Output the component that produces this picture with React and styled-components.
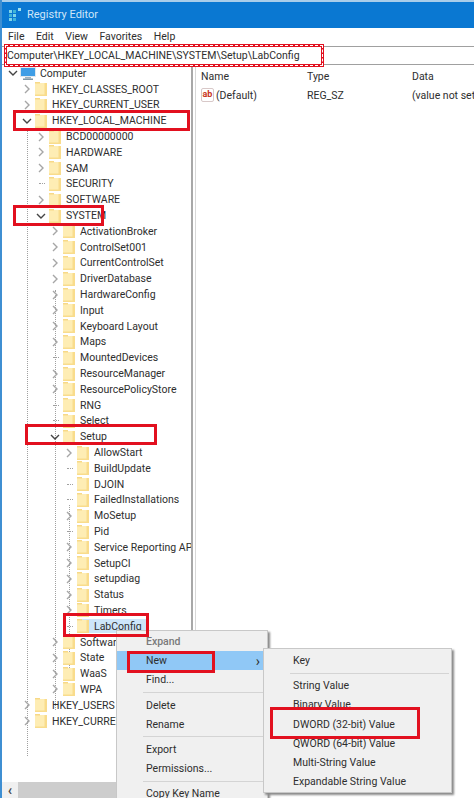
import React from "react";
import styled, { createGlobalStyle } from "styled-components";

const treeRows = [
    { level: 0, name: "Computer", state: "open", computer: true },
    { level: 1, name: "HKEY_CLASSES_ROOT", state: "closed" },
    { level: 1, name: "HKEY_CURRENT_USER", state: "closed" },
    { level: 1, name: "HKEY_LOCAL_MACHINE", state: "open" },
    { level: 2, name: "BCD00000000", state: "closed" },
    { level: 2, name: "HARDWARE", state: "closed" },
    { level: 2, name: "SAM", state: "closed" },
    { level: 2, name: "SECURITY", state: "leaf" },
    { level: 2, name: "SOFTWARE", state: "closed" },
    { level: 2, name: "SYSTEM", state: "open" },
    { level: 3, name: "ActivationBroker", state: "closed" },
    { level: 3, name: "ControlSet001", state: "closed" },
    { level: 3, name: "CurrentControlSet", state: "closed" },
    { level: 3, name: "DriverDatabase", state: "closed" },
    { level: 3, name: "HardwareConfig", state: "closed" },
    { level: 3, name: "Input", state: "closed" },
    { level: 3, name: "Keyboard Layout", state: "closed" },
    { level: 3, name: "Maps", state: "closed" },
    { level: 3, name: "MountedDevices", state: "leaf" },
    { level: 3, name: "ResourceManager", state: "closed" },
    { level: 3, name: "ResourcePolicyStore", state: "closed" },
    { level: 3, name: "RNG", state: "leaf" },
    { level: 3, name: "Select", state: "leaf" },
    { level: 3, name: "Setup", state: "open" },
    { level: 4, name: "AllowStart", state: "closed" },
    { level: 4, name: "BuildUpdate", state: "leaf" },
    { level: 4, name: "DJOIN", state: "leaf" },
    { level: 4, name: "FailedInstallations", state: "leaf" },
    { level: 4, name: "MoSetup", state: "closed" },
    { level: 4, name: "Pid", state: "leaf" },
    { level: 4, name: "Service Reporting API", state: "closed" },
    { level: 4, name: "SetupCI", state: "closed" },
    { level: 4, name: "setupdiag", state: "closed" },
    { level: 4, name: "Status", state: "closed" },
    { level: 4, name: "Timers", state: "closed" },
    { level: 4, name: "LabConfig", state: "leaf", selected: true },
    { level: 3, name: "Software", state: "closed" },
    { level: 3, name: "State", state: "closed" },
    { level: 3, name: "WaaS", state: "closed" },
    { level: 3, name: "WPA", state: "closed" },
    { level: 1, name: "HKEY_USERS", state: "closed" },
    { level: 1, name: "HKEY_CURRENT_CONFIG", state: "closed" },
];

const contextItems = [
    { label: "Expand", disabled: true },
    { label: "New", active: true, arrow: true },
    { label: "Find..." },
    { separator: true },
    { label: "Delete" },
    { label: "Rename" },
    { separator: true },
    { label: "Export" },
    { label: "Permissions..." },
    { separator: true },
    { label: "Copy Key Name" },
];

const submenuItems = [
    { label: "Key" },
    { separator: true },
    { label: "String Value" },
    { label: "Binary Value" },
    { label: "DWORD (32-bit) Value" },
    { label: "QWORD (64-bit) Value" },
    { label: "Multi-String Value" },
    { label: "Expandable String Value" },
];

const marks = [
    { x: 13, y: 110, w: 177, h: 21 },
    { x: 13, y: 205, w: 91, h: 21 },
    { x: 25, y: 424, w: 132, h: 21 },
    { x: 63, y: 613, w: 86, h: 24 },
    { x: 127, y: 651, w: 88, h: 22 },
    { x: 270, y: 707, w: 150, h: 32 },
];

function Chevron({ open }) {
    return (
        <ChevronIcon width="10" height="10" viewBox="0 0 10 10" $open={open}>
            <path d={open ? "M1 3l4 4 4-4" : "M3 1l4 4-4 4"} />
        </ChevronIcon>
    );
}

function Folder() {
    return (
        <FolderIcon width="12" height="14" viewBox="0 0 12 14">
            <rect x="0" y="1" width="12" height="13" fill="#f9dc8c" />
            <rect x="0" y="1" width="9.5" height="11.5" fill="#feedb4" />
            <rect x="0" y="0" width="5" height="1.5" fill="#f7d988" />
        </FolderIcon>
    );
}

function ComputerGlyph() {
    return (
        <ComputerIcon width="16" height="13" viewBox="0 0 16 13">
            <rect x="0" y="0" width="16" height="10" fill="#dfe8ee" />
            <rect x="1" y="1" width="14" height="8" fill="#3f9ee6" />
            <rect x="5" y="10" width="6" height="1.5" fill="#9fb2be" />
            <rect x="3" y="11.5" width="10" height="1.5" fill="#7f97a6" />
        </ComputerIcon>
    );
}

function TreeRow({ row }) {
    return (
        <Row $level={row.level}>
            <Toggle>
                {row.state === "leaf" ? <Connector /> : <Chevron open={row.state === "open"} />}
            </Toggle>
            <RowBody $selected={row.selected}>
                {row.computer ? <ComputerGlyph /> : <Folder />}
                <span>{row.name}</span>
            </RowBody>
        </Row>
    );
}

function PopupMenu({ items, Component }) {
    return (
        <Component>
            {items.map((item, i) =>
                item.separator ? (
                    <Separator key={i} />
                ) : (
                    <MenuItem key={i} $active={item.active} $disabled={item.disabled}>
                        {item.label}
                        {item.arrow && <Arrow>›</Arrow>}
                    </MenuItem>
                )
            )}
        </Component>
    );
}

export default function App() {
    return (
        <>
            <GlobalStyle />
            <Window>
                <TitleBar>
                    <AppIcon width="13" height="13" viewBox="0 0 13 13">
                        <rect x="0" y="2" width="3" height="3" fill="#7fd4e8" />
                        <rect x="4" y="2" width="3" height="3" fill="#3fb4d8" />
                        <rect x="0" y="6" width="3" height="3" fill="#3fb4d8" />
                        <rect x="4" y="6" width="3" height="3" fill="#7fd4e8" />
                        <rect x="0" y="10" width="3" height="3" fill="#7fd4e8" />
                        <rect x="4" y="10" width="3" height="3" fill="#3fb4d8" />
                        <rect x="9" y="0" width="3" height="3" fill="#9fe0ee" />
                    </AppIcon>
                    <Title>Registry Editor</Title>
                </TitleBar>
                <MenuBar>
                    <span>File</span>
                    <span>Edit</span>
                    <span>View</span>
                    <span>Favorites</span>
                    <span>Help</span>
                </MenuBar>
                <AddressBar>Computer\HKEY_LOCAL_MACHINE\SYSTEM\Setup\LabConfig</AddressBar>
                <Panes>
                    <TreePane>
                        <GuideLine $x={25} $top={0} $height={626} />
                        <GuideLine $x={53} $top={160} $height={420} />
                        <GuideLine $x={67} $top={375} $height={175} />
                        {treeRows.map((row) => (
                            <TreeRow key={row.name} row={row} />
                        ))}
                        <ScrollBar>
                            <ScrollArrow>‹</ScrollArrow>
                            <ScrollThumb />
                        </ScrollBar>
                    </TreePane>
                    <ListPane>
                        <ListHeader>
                            <NameCell>Name</NameCell>
                            <TypeCell>Type</TypeCell>
                            <DataCell>Data</DataCell>
                        </ListHeader>
                        <ListRow>
                            <NameCell>
                                <ValueIcon>ab</ValueIcon>
                                (Default)
                            </NameCell>
                            <TypeCell>REG_SZ</TypeCell>
                            <DataCell>(value not set)</DataCell>
                        </ListRow>
                    </ListPane>
                </Panes>
                <PopupMenu items={contextItems} Component={ContextMenu} />
                <PopupMenu items={submenuItems} Component={SubMenu} />
                <AddressMark />
                {marks.map((m) => (
                    <RedMark key={m.y} style={{ left: m.x, top: m.y, width: m.w, height: m.h }} />
                ))}
            </Window>
        </>
    );
}

const GlobalStyle = createGlobalStyle`
    html, body {
        margin: 0;
        padding: 0;
        background: white;
    }
    * {
        box-sizing: border-box;
    }
`;

const Window = styled.div`
    position: relative;
    width: 474px;
    height: 798px;
    overflow: hidden;
    background: white;
    border-left: 2px solid #3f8fd2;
    font-family: Roboto, "Noto Sans", sans-serif;
    font-size: 10.5px;
    color: #2e2e2e;
`;

const TitleBar = styled.div`
    height: 28px;
    margin-left: -2px;
    padding: 0 0 0 9px;
    display: flex;
    align-items: center;
    gap: 5px;
    background: linear-gradient(#a9cdea 0 2px, #0a78d2 2px);
`;

const AppIcon = styled.svg`
    flex: none;
`;

const Title = styled.span`
    color: #cfe6f8;
    font-size: 11px;
`;

const MenuBar = styled.div`
    height: 16px;
    padding-left: 6px;
    display: flex;
    align-items: center;
    gap: 11.5px;
`;

const AddressBar = styled.div`
    height: 19px;
    margin-top: 2px;
    padding-left: 5px;
    display: flex;
    align-items: center;
    border-top: 1px solid #a0a0a0;
    border-bottom: 1px solid #a0a0a0;
    white-space: nowrap;
`;

const Panes = styled.div`
    display: flex;
    height: 733px;
`;

const TreePane = styled.div`
    position: relative;
    width: 191px;
    height: 733px;
    padding-top: 0.5px;
    overflow: hidden;
    flex: none;
    border-right: 2px solid #a8a8a8;
`;

const GuideLine = styled.div`
    position: absolute;
    left: ${(p) => p.$x}px;
    top: ${(p) => p.$top + 65}px;
    height: ${(p) => p.$height}px;
    border-left: 1px dotted #a0a0a0;
`;

const Row = styled.div`
    position: relative;
    height: 15.8px;
    padding-left: ${(p) => 6 + p.$level * 14}px;
    display: flex;
    align-items: center;
    white-space: nowrap;
`;

const Toggle = styled.span`
    width: 10px;
    height: 14px;
    margin-right: 3px;
    flex: none;
    display: flex;
    align-items: center;
    justify-content: center;
`;

const RowBody = styled.span`
    display: flex;
    align-items: center;
    padding-right: 4px;
    background: ${(p) => (p.$selected ? "#cde6fa" : "transparent")};
`;

const ChevronIcon = styled.svg`
    fill: none;
    stroke: ${(p) => (p.$open ? "#444" : "#a6a6a6")};
    stroke-width: 1.4;
`;

const Connector = styled.span`
    width: 6px;
    margin-left: 2px;
    border-top: 1px dotted #a0a0a0;
`;

const FolderIcon = styled.svg`
    flex: none;
    margin-right: 5px;
`;

const ComputerIcon = styled.svg`
    flex: none;
    margin-right: 4px;
    margin-left: -1px;
`;

const ScrollBar = styled.div`
    position: absolute;
    left: 0;
    right: 0;
    bottom: 0;
    height: 16px;
    display: flex;
    align-items: center;
    background: #f0f0f0;
`;

const ScrollArrow = styled.span`
    width: 16px;
    text-align: center;
    font-size: 14px;
    font-weight: 700;
    color: #444;
`;

const ScrollThumb = styled.div`
    width: 100px;
    height: 100%;
    background: #cdcdcd;
`;

const ListPane = styled.div`
    flex: 1;
    min-width: 0;
    margin-left: 2px;
    padding-left: 5px;
    overflow: hidden;
    border-left: 1px solid #d8d8d8;
`;

const ListHeader = styled.div`
    height: 22px;
    display: flex;
    align-items: center;
    white-space: nowrap;
`;

const ListRow = styled(ListHeader)`
    height: 20px;
    margin-top: -2px;
`;

const NameCell = styled.span`
    width: 106px;
    flex: none;
    display: flex;
    align-items: center;
`;

const TypeCell = styled.span`
    width: 105px;
    flex: none;
`;

const DataCell = styled.span`
    flex: none;
`;

const ValueIcon = styled.span`
    width: 13px;
    height: 14px;
    margin-right: 2px;
    border: 1px solid #d8c8c8;
    border-radius: 2px;
    color: #c8341c;
    font-size: 9px;
    font-weight: 700;
    line-height: 11px;
    text-align: center;
`;

const popup = `
    position: absolute;
    background: #f0f0f0;
    border: 1px solid #c8c8c8;
    box-shadow: 2px 2px 2px #8a8a8a;
`;

const ContextMenu = styled.div`
    ${popup}
    left: 114px;
    top: 630px;
    width: 152px;
    height: 180px;
    padding-top: 1px;
`;

const SubMenu = styled.div`
    ${popup}
    left: 261px;
    top: 648px;
    width: 189px;
    height: 145px;
    padding-top: 2px;
`;

const MenuItem = styled.div`
    position: relative;
    height: 19.2px;
    padding-left: 29px;
    display: flex;
    align-items: center;
    white-space: nowrap;
    color: ${(p) => (p.$disabled ? "#7a7a7a" : "#2e2e2e")};
    font-weight: ${(p) => (p.$disabled ? 500 : 400)};
    background: ${(p) => (p.$active ? "#90c8f6" : "transparent")};
`;

const Arrow = styled.span`
    position: absolute;
    right: 7px;
    font-size: 14px;
`;

const Separator = styled.div`
    height: 1px;
    margin: 2.5px 2px 2.5px 26px;
    background: #d4d4d4;
`;

const RedMark = styled.div`
    position: absolute;
    margin-left: -2px;
    border: 3px solid #e2101f;
`;

const AddressMark = styled.div`
    position: absolute;
    left: 2px;
    top: 44px;
    width: 320px;
    height: 23px;
    border: 3px solid #e2101f;
    outline: 1px dashed white;
    outline-offset: -2px;
`;
